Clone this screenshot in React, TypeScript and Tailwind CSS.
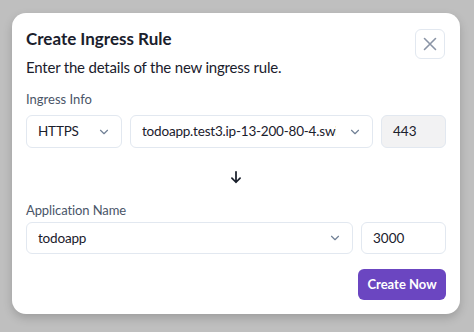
import React from 'react'

function Chevron() {
  return (
    <svg width="14" height="14" viewBox="0 0 24 24" fill="none" stroke="#718096" strokeWidth="2" strokeLinecap="round" strokeLinejoin="round" className="shrink-0">
      <path d="M6 9l6 6 6-6" />
    </svg>
  )
}

function SelectBox({ value, className }: { value: string; className: string }) {
  return (
    <div className={`flex shrink-0 items-center h-full rounded-md border border-[#e2e8f0] bg-white pl-[11px] pr-[10px] ${className}`}>
      <div className="flex-1 min-w-0 overflow-hidden whitespace-nowrap text-[13.5px] tracking-[-0.2px] text-[#1a202c] mr-[12px]">{value}</div>
      <Chevron />
    </div>
  )
}

export default function App() {
  return (
    <div
      className="w-[474px] h-[332px] bg-[#bfbfbf] pt-[13px] pl-[12px]"
      style={{ fontFamily: 'Lato, "Noto Sans", sans-serif' }}
    >
      <div className="relative w-[448px] bg-white rounded-[14px] shadow-[0_4px_10px_rgba(0,0,0,0.18)] px-[14px] pt-[14px] pb-[14px]">
        <button className="absolute top-[16px] right-[15px] w-[30px] h-[30px] rounded-md border border-[#e2e8f0] flex items-center justify-center">
          <svg width="14" height="14" viewBox="0 0 14 14" stroke="#8a94a6" strokeWidth="1.6" strokeLinecap="round">
            <path d="M1.5 1.5l11 11M12.5 1.5l-11 11" />
          </svg>
        </button>

        <h2 className="text-[17px] leading-[24px] font-bold text-[#1a202c]">Create Ingress Rule</h2>
        <p className="mt-[5px] text-[15px] leading-[22px] tracking-[-0.2px] text-[#1a202c]">Enter the details of the new ingress rule.</p>

        <div className="mt-[12px] text-[13px] leading-[18px] text-[#4a5568]">Ingress Info</div>
        <div className="mt-[7px] flex h-[33px] gap-2">
          <SelectBox value="HTTPS" className="w-[96px]" />
          <SelectBox value="todoapp.test3.ip-13-200-80-4.swiftwave.xyz" className="w-[243px]" />
          <div className="flex-1 min-w-0 flex items-center rounded-md border border-[#e2e8f0] bg-[#f2f2f3] px-[11px] text-[13.5px] text-[#1a202c]">443</div>
        </div>

        <div className="mt-[22px] flex justify-center">
          <svg width="14" height="14" viewBox="0 0 24 24" fill="none" stroke="#1a202c" strokeWidth="3" strokeLinecap="round" strokeLinejoin="round">
            <path d="M12 3v18M5 14l7 7 7-7" />
          </svg>
        </div>

        <div className="mt-[17px] text-[13px] leading-[18px] tracking-[-0.1px] text-[#4a5568]">Application Name</div>
        <div className="mt-[3px] flex h-[32px] gap-2">
          <SelectBox value="todoapp" className="w-[327px]" />
          <div className="flex-1 min-w-0 flex items-center rounded-md border border-[#e2e8f0] bg-white px-[11px] text-[13.5px] text-[#1a202c]">3000</div>
        </div>

        <div className="mt-[15px] flex justify-end">
          <button className="h-[31px] w-[88px] rounded-md bg-[#6b46c1] text-white text-[13px] font-bold whitespace-nowrap">Create Now</button>
        </div>
      </div>
    </div>
  )
}
